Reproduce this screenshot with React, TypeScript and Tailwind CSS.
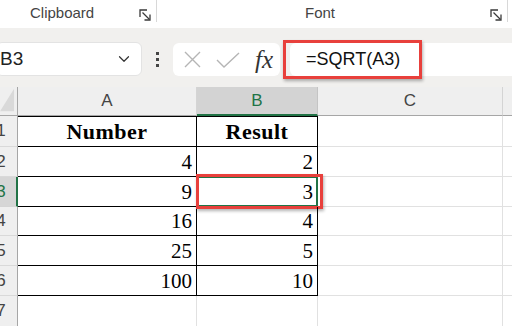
import { ChevronDown } from "lucide-react";

const rows = [
  { n: 1, a: "Number", b: "Result", head: true, h: "h-[31px]" },
  { n: 2, a: "4", b: "2", h: "h-[30px]" },
  { n: 3, a: "9", b: "3", h: "h-[30px]" },
  { n: 4, a: "16", b: "4", h: "h-[29px]" },
  { n: 5, a: "25", b: "5", h: "h-[30px]" },
  { n: 6, a: "100", b: "10", h: "h-[30px]" },
];

function Launcher() {
  return (
    <svg width="12" height="12" viewBox="0 0 12 12" fill="none" stroke="#3a3a3a" strokeWidth="1.3">
      <path d="M1 8V1h7" />
      <path d="M3.5 3.5l7 7" />
      <path d="M11 5.5V11H5.5" />
    </svg>
  );
}

function RowHeader({ n, selected }: { n: number; selected?: boolean }) {
  return (
    <div
      className={
        selected
          ? "w-[18px] shrink-0 overflow-hidden bg-[#d6d6d6] border-r-2 border-r-[#217346] border-b border-b-[#d4d4d4] flex items-center"
          : "w-[18px] shrink-0 overflow-hidden bg-[#efefef] border-r border-r-[#a6a6a6] border-b border-b-[#d9d9d9] flex items-center"
      }
    >
      <span
        className={
          selected
            ? "w-[30px] shrink-0 -ml-[14px] text-center text-[17px] text-[#217346]"
            : "w-[30px] shrink-0 -ml-[14px] text-center text-[17px] text-[#444]"
        }
      >
        {n}
      </span>
    </div>
  );
}

export default function App() {
  return (
    <div className="w-[512px] h-[326px] overflow-hidden bg-white font-['Liberation_Sans',Arial,sans-serif] select-none">
      {/* ribbon group labels */}
      <div className="flex h-[28px] bg-white text-[15px] text-[#444]">
        <div className="w-[157px] h-[22px] flex items-center border-r border-[#d8d8d8]">
          <span className="pl-[30px] pt-[4px] leading-[20px]">Clipboard</span>
          <span className="ml-auto mr-[5px] mt-[7px]">
            <Launcher />
          </span>
        </div>
        <div className="w-[351px] h-[22px] flex items-center border-r border-[#d8d8d8]">
          <span className="pl-[148px] pt-[4px] leading-[20px]">Font</span>
          <span className="ml-auto mr-[5px] mt-[7px]">
            <Launcher />
          </span>
        </div>
      </div>

      {/* formula bar */}
      <div className="h-[59px] bg-[#f1f0ee] flex items-start pt-[14px]">
        <div className="w-[146px] -ml-[4px] h-[34px] shrink-0 bg-white rounded-md border border-[#e3e3e3] flex items-center">
          <span className="pl-[3px] text-[19px] text-[#222]">B3</span>
          <ChevronDown className="ml-auto mr-[8px] text-[#333]" size={18} strokeWidth={1.6} />
        </div>
        <div className="w-[31px] h-[34px] shrink-0 flex flex-col items-center justify-center gap-[3px]">
          <span className="w-[3px] h-[3px] bg-[#444]" />
          <span className="w-[3px] h-[3px] bg-[#444]" />
          <span className="w-[3px] h-[3px] bg-[#444]" />
        </div>
        <div className="w-[107px] h-[33px] mt-[1px] shrink-0 bg-white rounded-md flex items-center">
          <svg className="ml-[10px]" width="19" height="19" viewBox="0 0 19 19" stroke="#b5b5b5" strokeWidth="1.4" fill="none">
            <path d="M2 2l15 15M17 2L2 17" />
          </svg>
          <svg className="ml-[14px]" width="24" height="16" viewBox="0 0 24 16" stroke="#b5b5b5" strokeWidth="1.4" fill="none">
            <path d="M1 8l7 7L23 1" />
          </svg>
          <span className="ml-[15px] text-[25px] italic font-['Liberation_Serif',serif] text-[#333] leading-none">fx</span>
        </div>
        <div className="relative flex-1 h-[33px] mt-[1px] ml-[10px] bg-white rounded-l-md flex items-center">
          <span className="pl-[16px] text-[18px] text-[#111]">=SQRT(A3)</span>
          <div className="absolute -left-[7px] -top-[3px] w-[139px] h-[39px] border-[3px] border-[#e8403c] shadow-[1px_2px_3px_rgba(0,0,0,0.3)]" />
        </div>
      </div>

      {/* column headers */}
      <div className="flex h-[29px] text-[17px] text-[#444]">
        <div className="w-[18px] shrink-0 bg-[#efefef] border-r border-b border-[#a6a6a6] flex items-end justify-end">
          <svg width="16" height="24" viewBox="0 0 16 24" className="mb-[3px] mr-[2px]">
            <polygon points="15,0 15,24 0,24" fill="#d9d9d9" />
          </svg>
        </div>
        <div className="w-[179px] shrink-0 bg-[#efefef] border-r border-r-[#d4d4d4] border-b border-b-[#a6a6a6] flex items-center justify-center">
          A
        </div>
        <div className="w-[121px] shrink-0 bg-[#d3d3d3] border-r border-r-[#c4c4c4] border-b-2 border-b-[#217346] flex items-center justify-center text-[#217346]">
          B
        </div>
        <div className="w-[185px] shrink-0 bg-[#efefef] border-r border-r-[#d4d4d4] border-b border-b-[#a6a6a6] flex items-center justify-center">
          C
        </div>
        <div className="flex-1 bg-[#efefef] border-b border-b-[#a6a6a6]" />
      </div>

      {/* cells */}
      {rows.map((r) => (
        <div key={r.n} className={"flex " + r.h}>
          <RowHeader n={r.n} selected={r.n === 3} />
          <div
            className={
              (r.head ? "border-t justify-center font-bold text-[22px] tracking-[0.5px] " : "justify-end pr-[4px] text-[21px] ") +
              "w-[179px] shrink-0 border-r border-b border-black flex items-end pb-[2px] font-['Liberation_Serif',serif] leading-[24px] text-black"
            }
          >
            {r.a}
          </div>
          <div
            className={
              (r.head ? "border-t justify-center font-bold text-[22px] tracking-[0.5px] " : "justify-end pr-[4px] text-[21px] ") +
              "relative w-[121px] shrink-0 border-r border-b border-black flex items-end pb-[2px] font-['Liberation_Serif',serif] leading-[24px] text-black"
            }
          >
            {r.b}
            {r.n === 3 && (
              <>
                <div className="absolute -left-[1px] -top-[1px] -right-[1px] -bottom-[1px] border-2 border-[#217346]" />
                <div className="absolute -left-[1px] -top-[3px] w-[127px] h-[35px] border-[3px] border-[#e8403c] shadow-[1px_2px_3px_rgba(0,0,0,0.3)]" />
              </>
            )}
          </div>
          <div className="w-[185px] shrink-0 border-r border-b border-[#e1e1e1]" />
          <div className="flex-1 border-b border-[#e1e1e1]" />
        </div>
      ))}
      <div className="flex h-[31px]">
        <RowHeader n={7} />
        <div className="w-[179px] shrink-0 border-r border-b border-[#e1e1e1]" />
        <div className="w-[121px] shrink-0 border-r border-b border-[#e1e1e1]" />
        <div className="w-[185px] shrink-0 border-r border-b border-[#e1e1e1]" />
        <div className="flex-1 border-b border-[#e1e1e1]" />
      </div>
    </div>
  );
}
